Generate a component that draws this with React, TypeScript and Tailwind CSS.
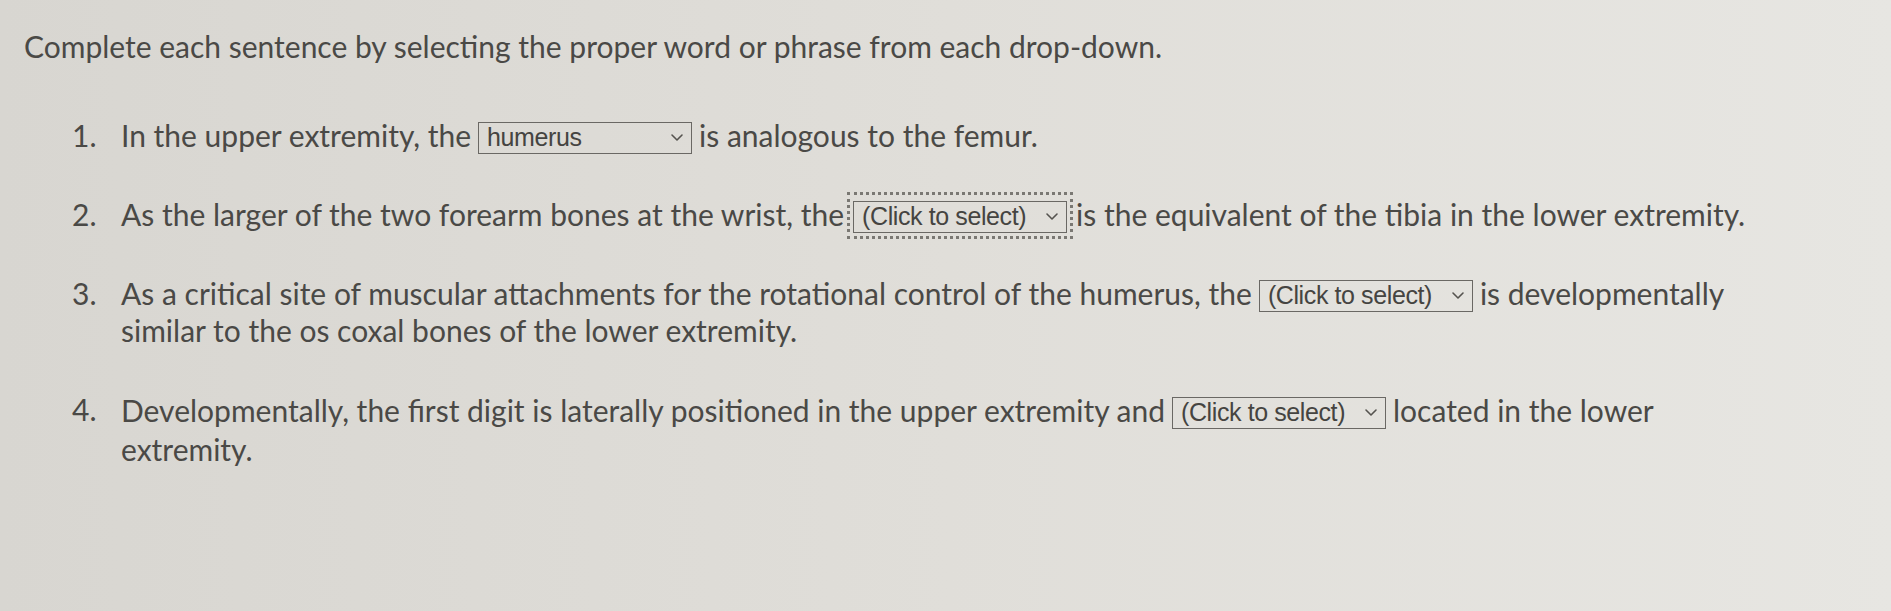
import React from 'react';

interface DropProps {
    value: string;
    focused?: boolean;
}

function Chevron() {
    return (
        <svg width="14" height="9" viewBox="0 0 14 9" fill="none" stroke="#55534f" strokeWidth="1.6" strokeLinecap="round" strokeLinejoin="round">
            <polyline points="2 2 7 7 12 2" />
        </svg>
    );
}

function Drop({ value, focused }: DropProps) {
    const box = (
        <span className="inline-flex h-[32px] w-[214px] items-center justify-between border-[1.5px] border-[#6a6864] pb-[2px] pl-[8px] pr-[7px] align-middle font-['Liberation_Sans',Arial,sans-serif] text-[25px] leading-none tracking-[-0.4px] text-[#454441]">
            <span>{value}</span>
            <Chevron />
        </span>
    );

    if (focused) {
        return (
            <span className="mx-[3px] my-[-10px] inline-block -translate-y-[3px] border-[3px] border-dotted border-[#7a7873] p-[3px] align-middle leading-none">
                {box}
            </span>
        );
    }
    return <span className="mx-[7px] my-[-4px] inline-block -translate-y-[3px] align-middle leading-none">{box}</span>;
}

export default function App() {
    return (
        <div className="min-h-[611px] w-full bg-gradient-to-r from-[#d8d6d1] via-[#e0ded9] to-[#e7e6e2] pl-[24px] pr-[118px] pt-[28px] font-['Lato',sans-serif] text-[30px] leading-[37px] text-[#4a4946]">
            <p>Complete each sentence by selecting the proper word or phrase from each drop-down.</p>

            <ol className="ml-[48px] mt-[52px] flex flex-col gap-[42px]">
                <li className="flex">
                    <span className="w-[49px] shrink-0">1.</span>
                    <span className="flex-1">
                        In the upper extremity, the<Drop value="humerus" />is analogous to the femur.
                    </span>
                </li>
                <li className="flex">
                    <span className="w-[49px] shrink-0">2.</span>
                    <span className="flex-1">
                        As the larger of the two forearm bones at the wrist, the<Drop value="(Click to select)" focused />is the equivalent of the tibia in the lower extremity.
                    </span>
                </li>
                <li className="flex">
                    <span className="w-[49px] shrink-0">3.</span>
                    <span className="flex-1">
                        As a critical site of muscular attachments for the rotational control of the humerus, the<Drop value="(Click to select)" />is developmentally similar to the os coxal bones of the lower extremity.
                    </span>
                </li>
                <li className="flex">
                    <span className="w-[49px] shrink-0">4.</span>
                    <span className="flex-1 leading-[39px]">
                        Developmentally, the first digit is laterally positioned in the upper extremity and<Drop value="(Click to select)" />located in the lower extremity.
                    </span>
                </li>
            </ol>
        </div>
    );
}
